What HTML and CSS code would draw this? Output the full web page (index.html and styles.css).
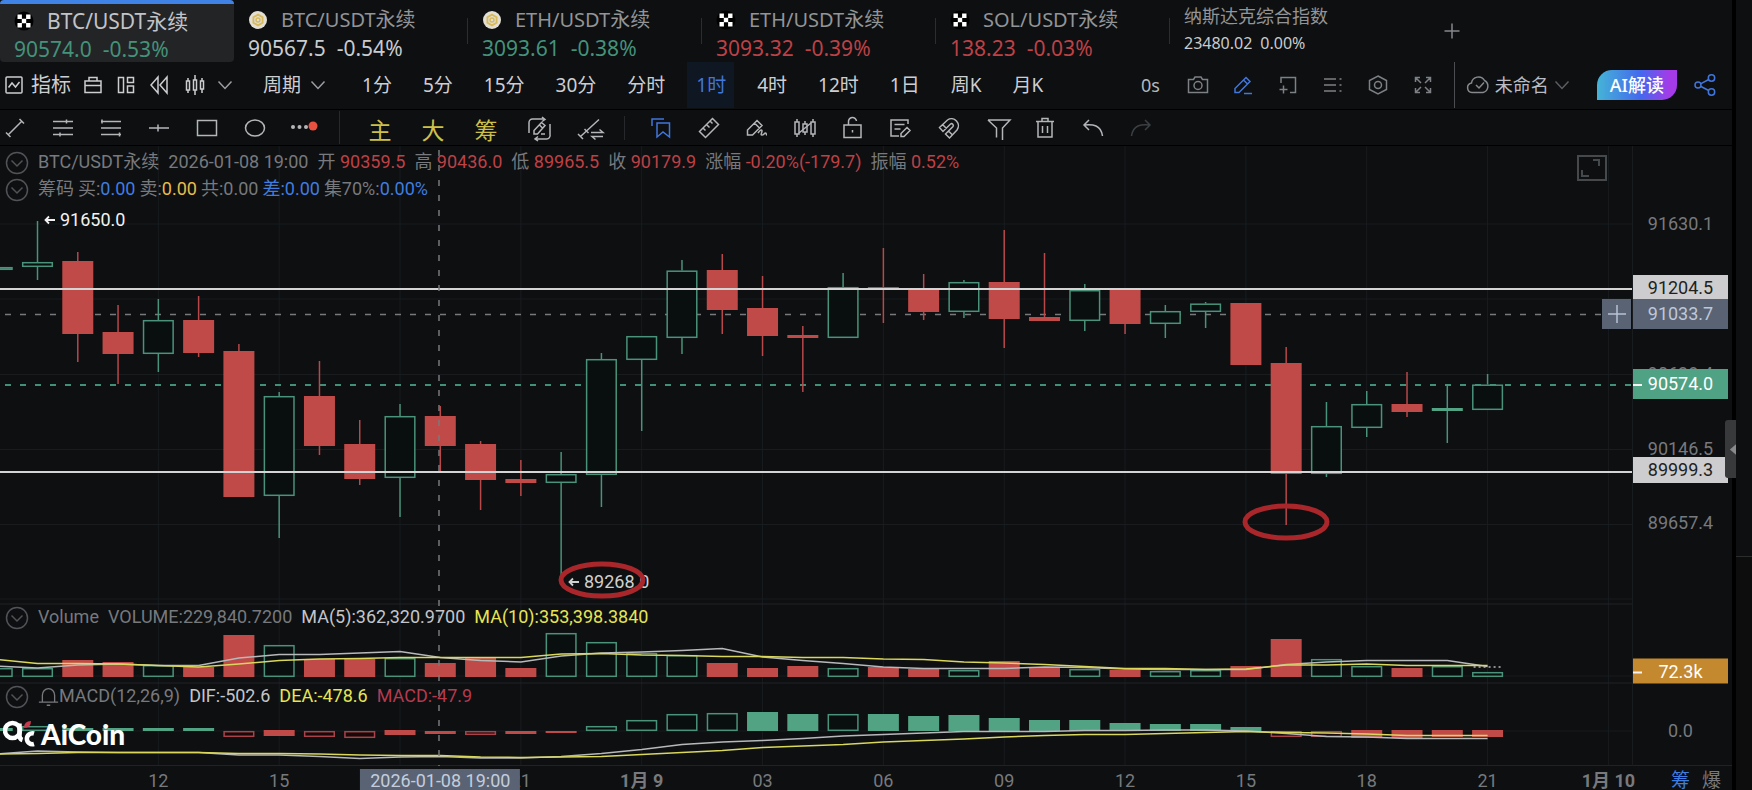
FILE: index.html
```html
<!DOCTYPE html>
<html lang="zh-CN">
<head>
<meta charset="utf-8">
<title>BTC/USDT永续</title>
<link rel="stylesheet" href="styles.css">
</head>
<body>
<svg class="defs" width="0" height="0" aria-hidden="true">
  <symbol id="okx" viewBox="0 0 20 20"><circle cx="10" cy="10" r="9.5" fill="#000"/><path fill="#fff" d="M3.5 3.5h4.4v4.4H3.5zM12.1 3.5h4.4v4.4h-4.4zM7.8 7.8h4.4v4.4H7.8zM3.5 12.1h4.4v4.4H3.5zM12.1 12.1h4.4v4.4h-4.4z"/></symbol>
  <symbol id="coin" viewBox="0 0 20 20"><circle cx="10" cy="10" r="9" fill="#e3dfd3"/><path d="M10 4.6l4.6 2.7v5.4L10 15.4l-4.6-2.7V7.300z" fill="none" stroke="#d8b95c" stroke-width="1.8"/><circle cx="10" cy="10" r="2" fill="none" stroke="#d8b95c" stroke-width="1.4"/></symbol>
  <symbol id="chev" viewBox="0 0 16 16"><path d="M1.500 4.500L8 11.500L14.500 4.500"/></symbol>
  <symbol id="fold" viewBox="0 0 24 24"><circle cx="12" cy="12" r="10.500"/><path d="M6.500 9.500L12 15L17.500 9.500"/></symbol>
  <symbol id="arrow" viewBox="0 0 11 10"><path d="M11 5H1.500M5 1.500L1.500 5L5 8.500"/></symbol>
</svg>

<div class="app">
  <nav class="tabs">
    <button class="tab active"><span class="pair"><svg class="coin"><use href="#okx"/></svg>BTC/USDT永续</span><span class="quote up"><span>90574.0</span><span>-0.53%</span></span></button>
    <button class="tab"><span class="pair"><svg class="coin"><use href="#coin"/></svg>BTC/USDT永续</span><span class="quote"><span>90567.5</span><span>-0.54%</span></span></button>
    <button class="tab"><span class="pair"><svg class="coin"><use href="#coin"/></svg>ETH/USDT永续</span><span class="quote up"><span>3093.61</span><span>-0.38%</span></span></button>
    <button class="tab"><span class="pair"><svg class="coin"><use href="#okx"/></svg>ETH/USDT永续</span><span class="quote down"><span>3093.32</span><span>-0.39%</span></span></button>
    <button class="tab"><span class="pair"><svg class="coin"><use href="#okx"/></svg>SOL/USDT永续</span><span class="quote down"><span>138.23</span><span>-0.03%</span></span></button>
    <button class="tab index"><span class="pair">纳斯达克综合指数</span><span class="quote"><span>23480.02</span><span>0.00%</span></span></button>
    <button class="add" aria-label="添加"><svg class="icon" viewBox="0 0 24 24"><path d="M12 4.500v15M4.500 12h15"/></svg></button>
  </nav>

  <div class="toolbar">
    <div class="tools">
      <button class="labelled"><svg class="icon" viewBox="0 0 24 24"><rect x="4" y="4" width="16" height="16" rx="1"/><path d="M6.500 14.500l3.500-4.500 3.500 4 4-5"/></svg>指标</button>
      <button aria-label="工具箱"><svg class="icon" viewBox="0 0 24 24"><rect x="4" y="8" width="16" height="11.500"/><path d="M8 8V4.500h8V8M4 12.500h16"/></svg></button>
      <button aria-label="布局"><svg class="icon" viewBox="0 0 24 24"><rect x="3.500" y="4.500" width="5" height="15"/><rect x="12.500" y="4.500" width="6" height="5"/><rect x="12.500" y="13" width="6" height="6.500"/></svg></button>
      <button aria-label="回放"><svg class="icon" viewBox="0 0 24 24"><path d="M9 4v16L2 12zM18 4v16l-7-8z"/></svg></button>
      <button aria-label="K线类型"><svg class="icon" viewBox="0 0 24 24"><rect x="3.500" y="8" width="3" height="9"/><rect x="10.500" y="7" width="3" height="10"/><rect x="17.500" y="8" width="3" height="8"/><path d="M5 5v3M5 17v3M12 2v5M12 17v5M19 5v3M19 16v4"/></svg></button>
      <button aria-label="更多类型"><svg class="chev"><use href="#chev"/></svg></button>
    </div>
    <button class="period">周期<svg class="chev"><use href="#chev"/></svg></button>
    <div class="intervals">
      <button>1分</button><button>5分</button><button>15分</button><button>30分</button><button>分时</button><button class="on">1时</button><button>4时</button><button>12时</button><button>1日</button><button>周K</button><button>月K</button>
    </div>
    <div class="actions">
      <span class="timer">0s</span>
      <button aria-label="截图"><svg class="icon" viewBox="0 0 24 24"><path d="M2.500 6.500h5L9 4h6l1.500 2.500h5v13h-19z"/><circle cx="12" cy="12.500" r="4"/></svg></button>
      <button class="blue" aria-label="画线"><svg class="icon" viewBox="0 0 24 24"><path d="M15 4.500L19 8.500L8 19.500H4v-4zM12.500 7l4 4M13 20.500h8"/></svg></button>
      <button aria-label="新窗口"><svg class="icon" viewBox="0 0 24 24"><path d="M5 10V4.500h14.500v15H14M7.500 12.500v8M3.500 16.500h8"/></svg></button>
      <button aria-label="列表"><svg class="icon" viewBox="0 0 24 24"><path d="M3 6h12M3 12h12M3 18h12M18.500 6h2M18.500 12h2M18.500 18h2"/></svg></button>
      <button aria-label="设置"><svg class="icon" viewBox="0 0 24 24"><path d="M12 3l8.500 4.500v9L12 21l-8.500-4.500v-9z"/><circle cx="12" cy="12" r="3.500"/></svg></button>
      <button aria-label="全屏"><svg class="icon" viewBox="0 0 24 24"><path d="M4.500 9V4.500H9M15 4.500h4.500V9M19.500 15v4.500H15M9 19.500H4.500V15M5 5l5 5M19 5l-5 5M19 19l-5-5M5 19l5-5"/></svg></button>
    </div>
    <div class="workspace">
      <button class="name"><svg class="icon" viewBox="0 0 24 24"><path d="M7 19.500H6a4.800 4.800 0 0 1-.5-9.500A7 7 0 0 1 18.500 7.500a6.500 6.500 0 0 1-1.500 12H7"/><path d="M10 12l3 3 5-5.500"/></svg>未命名<svg class="chev dim"><use href="#chev"/></svg></button>
      <button class="ai">AI解读</button>
      <button class="blue" aria-label="分享"><svg class="icon" viewBox="0 0 24 24"><circle cx="5" cy="12" r="3"/><circle cx="18.500" cy="5" r="3.200"/><circle cx="18.500" cy="19" r="3.200"/><path d="M8 10.700l7.700-4.200M8 13.500l7.700 4"/></svg></button>
    </div>
  </div>

  <div class="drawbar">
    <div class="group">
      <button aria-label="线段"><svg class="icon" viewBox="0 0 24 24"><path d="M5 19L19 5M3 16.500l4.500 4.500M16.500 3l4.500 4.500"/></svg></button>
      <button aria-label="平行线"><svg class="icon" viewBox="0 0 24 24"><path d="M2 5.500h20M2 12h20M2 18.500h20M15.500 3.500v4M9 16.500v4"/></svg></button>
      <button aria-label="射线组"><svg class="icon" viewBox="0 0 24 24"><path d="M2 5.500h20M2 12h20M2 18.500h20M3 3.500v4M20.500 16.500v4"/></svg></button>
      <button aria-label="水平线"><svg class="icon" viewBox="0 0 24 24"><path d="M2 12h20M11 8.500v7"/></svg></button>
      <button aria-label="矩形"><svg class="icon" viewBox="0 0 24 24"><rect x="2.500" y="4.500" width="19" height="15"/></svg></button>
      <button aria-label="椭圆"><svg class="icon" viewBox="0 0 24 24"><ellipse cx="12" cy="12" rx="9.500" ry="8"/></svg></button>
      <button aria-label="更多"><svg class="icon dots" viewBox="0 0 24 24"><circle cx="2" cy="11" r="2"/><circle cx="8.500" cy="11" r="2"/><circle cx="15" cy="11" r="2"/><circle cx="22" cy="10" r="4.500"/></svg></button>
    </div>
    <div class="group wide">
      <button class="glyph">主</button>
      <button class="glyph">大</button>
      <button class="glyph">筹</button>
      <button aria-label="切换绘图"><svg class="icon" viewBox="0 0 24 24"><path d="M2 17V6.500A3.500 3.500 0 0 1 5.500 3H17M15 1l3 2.500-3 2M23 8v10.500A3.500 3.500 0 0 1 19.500 23H9M11 20.500l-3 2.500 3 2M7 18v-3.500l7.500-8 3.500 3-7.500 8.500zM12.500 9l3 3M14 18h4"/></svg></button>
      <button aria-label="切换线段"><svg class="icon" viewBox="0 0 24 24"><path d="M0.500 20.500L19 3.500M-2 18l5 5M4.500 13l4 4M11 16.500h12l-3.500-3M23 20.500H12l3.500 3"/></svg></button>
    </div>
    <div class="group">
      <button class="blue" aria-label="收藏"><svg class="icon" viewBox="0 0 24 24"><path d="M8 7h12.500v14L14 16l-6 5zM3 10V3h12"/></svg></button>
      <button aria-label="测量"><svg class="icon" viewBox="0 0 24 24"><path d="M2.500 15.500L15.500 2.500l6 6L8.500 21.500zM6 12l2.500 2.500M9.500 8.500l3 3M13 5l2.500 2.500"/></svg></button>
      <button aria-label="画笔"><svg class="icon" viewBox="0 0 24 24"><path d="M2.500 19v-5L12 4.500l5 5L7.500 19zM9.500 7l5 5M13 17c2-3 4-4 4-2s-2 4 0 4 2-2 3.500-2 0 2 1.500 2"/></svg></button>
      <button aria-label="形态"><svg class="icon" viewBox="0 0 24 24"><rect x="2" y="6" width="4" height="12"/><rect x="18" y="6" width="4" height="12"/><rect x="10" y="8" width="4" height="8"/><path d="M4 3v3M4 18v3M20 3v3M20 18v3M12 5v3M12 16v3M6 17l12-10"/></svg></button>
      <button aria-label="解锁"><svg class="icon" viewBox="0 0 24 24"><rect x="3" y="9" width="17" height="12.500"/><path d="M7.500 9V6a4 4 0 0 1 8-1M11.500 14v2.500"/></svg></button>
      <button aria-label="备注"><svg class="icon" viewBox="0 0 24 24"><path d="M19 8V4H2v16h8M5.500 8.500h10M5.500 13h6M12 20.500v-3l6-6 3 3-6 6z"/></svg></button>
      <button aria-label="磁吸"><svg class="icon" viewBox="0 0 24 24"><path d="M2.500 11.500l8-7.500a7 7 0 0 1 9.500 10l-7.500 8-4-4 7.500-7.500a1.800 1.800 0 0 0-2.500-2.500L6 15.500zM5.500 8.500l4 4M11.500 15l4 4"/></svg></button>
      <button aria-label="筛选"><svg class="icon" viewBox="0 0 24 24"><path d="M3 4h22L17.500 12v12M3 4L11.500 12v9.500"/></svg></button>
      <button aria-label="删除"><svg class="icon" viewBox="0 0 24 24"><path d="M3 5.500h18M5 5.500v15.500h14V5.500M9 5V2.500h6V5M9.500 10v7M14.500 10v7"/></svg></button>
      <button aria-label="撤销"><svg class="icon" viewBox="0 0 24 24"><path d="M8 4L3 9l5 5M3 9c9-1 17 0 18.500 11"/></svg></button>
      <button class="off" aria-label="重做"><svg class="icon" viewBox="0 0 24 24"><path d="M16 4l5 5-5 5M21 9C12 8 4 9 2.500 20"/></svg></button>
    </div>
  </div>

  <main class="chart">
    <div class="plot">
      <svg id="plot" class="canvas" viewBox="0 146 1632 620" preserveAspectRatio="none" role="img" aria-label="BTC/USDT 1小时K线"></svg>
      <section class="pane price">
        <div class="legend"><svg class="icon fold"><use href="#fold"/></svg><span>BTC/USDT永续</span><span>2026-01-08 19:00</span><span>开 <b class="down">90359.5</b></span><span>高 <b class="down">90436.0</b></span><span>低 <b class="down">89965.5</b></span><span>收 <b class="down">90179.9</b></span><span>涨幅 <b class="down">-0.20%(-179.7)</b></span><span>振幅 <b class="down">0.52%</b></span></div>
        <div class="legend tight"><svg class="icon fold"><use href="#fold"/></svg><span>筹码</span><span>买:<b class="azure">0.00</b></span><span>卖:<b class="gold">0.00</b></span><span>共:0.00</span><span class="azure">差:0.00</span><span>集70%:<b class="azure">0.00%</b></span></div>
        <button class="maximize" aria-label="最大化"><svg viewBox="0 0 30 26"><rect x="1" y="1" width="28" height="24"/><path d="M16 5h6v6M5 15v6h7"/></svg></button>
      </section>
      <section class="pane volume">
        <div class="legend"><svg class="icon fold"><use href="#fold"/></svg><span>Volume</span><span>VOLUME:229,840.7200</span><span class="pale">MA(5):362,320.9700</span><span class="yellow">MA(10):353,398.3840</span></div>
      </section>
      <section class="pane macd">
        <div class="legend"><svg class="icon fold"><use href="#fold"/></svg><svg class="icon bell" viewBox="0 0 24 24"><path d="M1 18.500h22M5 18v-7.500a7 7.500 0 0 1 14 0v7.500M10 22h4"/></svg><span>MACD(12,26,9)</span><span class="pale">DIF:-502.6</span><span class="yellow">DEA:-478.6</span><span class="crimson">MACD:-47.9</span></div>
        <div class="brand"><svg viewBox="0 0 32 28"><circle cx="9.500" cy="10.500" r="7.500"/><path d="M16.500 3.500v12q0 3.500 3 4.500M31 13.500a5.500 5.500 0 1 0 0 10.500"/><path class="leaf" d="M21 8q0-7 7-7 0 7-7 7z"/></svg>AiCoin</div>
      </section>
      <div class="note high"><svg><use href="#arrow"/></svg>91650.0</div>
      <div class="note low"><svg><use href="#arrow"/></svg>89268.0</div>
      <svg class="canvas marks" viewBox="0 146 1632 620" preserveAspectRatio="none" aria-hidden="true"><ellipse cx="602" cy="580" rx="41" ry="16"/><ellipse cx="1286" cy="522" rx="41" ry="16"/></svg>
      <button class="plus" aria-label="添加价格线"><svg class="icon" viewBox="0 0 24 24"><path d="M12 3v18M3 12h18"/></svg></button>
    </div>
    <div class="scale" id="scale"></div>
    <div class="times" id="times"></div>
    <div class="modes"><button class="azure">筹</button><button>爆</button></div>
  </main>
</div>
<aside class="side"><button class="handle" aria-label="展开侧栏"><svg viewBox="0 0 8 12"><path d="M8 0v12L1 6z"/></svg></button></aside>
<script src="chart.js"></script>
</body>
</html>
```
FILE: styles.css
```css
* { box-sizing: border-box; }
body {
  margin: 0;
  height: 100vh;
  display: flex;
  overflow: hidden;
  background: #0d0f11;
  color: #c9cbce;
  font-family: "Noto Sans", "Noto Sans CJK SC", sans-serif;
}
button {
  margin: 0;
  padding: 0;
  border: 0;
  background: none;
  color: inherit;
  font: inherit;
  white-space: nowrap;
}
.defs { position: absolute; }
.icon {
  display: block;
  flex: none;
  width: 24px;
  height: 24px;
  fill: none;
  stroke: currentColor;
  stroke-width: 1.5;
  overflow: visible;
}
.chev {
  flex: none;
  width: 16px;
  height: 16px;
  fill: none;
  stroke: #9b9ea3;
  stroke-width: 1.5;
}
.app { flex: 1; min-width: 0; display: flex; flex-direction: column; }

.up { color: #45927a; }
.down { color: #bd4145; }
.blue { color: #4176dc; }
.azure { color: #3f7de0; }
.gold { color: #e6bd4a; }
.yellow { color: #e6e455; }
.pale { color: #c4c5c8; }
.crimson { color: #b53a4e; }

/* instrument tabs */
.tabs { display: flex; height: 62px; flex: none; }
.tab {
  position: relative;
  width: 234px;
  padding: 6px 0 0 14px;
  display: flex;
  flex-direction: column;
  text-align: left;
}
.tab::after {
  content: "";
  position: absolute;
  right: 0;
  top: 18px;
  height: 26px;
  border-right: 1px solid #2b2d30;
}
.tab.active {
  background: #232426;
  border-top: 4px solid #3f83e6;
  border-radius: 4px;
  padding-top: 3px;
  color: #d6d7d9;
}
.tab.active::after, .tab.index::after { content: none; }
.pair {
  display: flex;
  align-items: center;
  height: 28px;
  font-size: 20px;
  line-height: 28px;
  color: #929497;
}
.active .pair { font-size: 21px; color: #c2c3c6; }
.coin { width: 20px; height: 20px; margin-right: 13px; }
.quote { display: flex; gap: 11px; font-size: 21px; line-height: 28px; }
.tab.index { padding-top: 3px; }
.index .pair { font-size: 18px; height: 26px; }
.index .quote { font-size: 16px; gap: 8px; line-height: 28px; }
.add { margin-left: 36px; color: #85888c; }

/* interval toolbar */
.toolbar {
  display: flex;
  align-items: center;
  flex: none;
  height: 48px;
  padding-bottom: 1px;
  border-bottom: 1px solid #000;
  font-size: 19px;
  line-height: 28px;
  color: #cdced1;
}
.tools { display: flex; align-items: center; gap: 10px; padding-left: 2px; }
.tools button, .actions button, .workspace button { display: flex; align-items: center; }
.tools .labelled { font-size: 20px; gap: 5px; }
.period { display: flex; align-items: center; gap: 9px; margin-left: 30px; }
.intervals { display: flex; align-self: stretch; margin-left: 20px; }
.intervals button { padding: 0 15px 0 16px; }
.intervals .on { padding: 0 8px 0 9px; margin: 0 7px; background: #0f1722; color: #4176dc; }
.actions { display: flex; align-items: center; gap: 21px; margin-left: auto; padding-right: 19px; color: #7d8084; }
.timer { margin-right: 5px; color: #b5b7ba; font-size: 18px; }
.actions .blue { color: #4176dc; }
.workspace {
  display: flex;
  align-items: center;
  align-self: stretch;
  padding: 0 15px 0 11px;
  border-left: 1px solid #4b4d50;
}
.workspace .name { gap: 5px; font-size: 18px; color: #b9bcc4; }
.name .icon { color: #85888c; }
.chev.dim { stroke: #5b5e62; }
.workspace .ai {
  height: 30px;
  margin: 0 16px 0 27px;
  padding: 0 13px;
  border-radius: 15px 0 15px 0;
  background: linear-gradient(90deg, #45b4d6, #4468ee 55%, #a33ce8 90%);
  color: #fff;
  font-size: 18px;
  font-weight: 500;
}

/* drawing toolbar */
.drawbar { display: flex; align-items: center; flex: none; height: 36px; border-bottom: 1px solid #000; color: #b4b6b9; }
.group { display: flex; align-items: center; gap: 24px; padding: 0 24px 0 3px; }
.group + .group { border-left: 1px solid #26282b; padding-left: 24px; }
.group + .group.wide { gap: 29px; padding: 0 20px 0 28px; }
.glyph { width: 24px; padding-top: 5px; font-size: 23px; line-height: 28px; color: #cfc04a; text-align: center; }
.dots circle { fill: #b4b6b9; stroke: none; }
.dots circle:last-child { fill: #e8503f; }
.off { color: #3d4043; }

/* chart area */
.chart {
  flex: 1;
  min-height: 0;
  display: grid;
  grid-template: minmax(0, 1fr) 24px / minmax(0, 1fr) 100px;
  font-family: Roboto, "Noto Sans CJK SC", sans-serif;
  font-size: 18px;
  color: #77797d;
}
.plot { position: relative; display: grid; grid-template-rows: 458fr 79fr 83fr; }
.canvas { position: absolute; inset: 0; width: 100%; height: 100%; }
.pane { position: relative; min-height: 0; }
.price { padding-top: 3px; }
.legend {
  display: flex;
  align-items: baseline;
  gap: 9px;
  height: 27px;
  padding-left: 5px;
  line-height: 26px;
  white-space: nowrap;
}
.legend b { font-weight: 400; }
.legend.tight { gap: 4px; }
.legend .fold { align-self: center; color: #505357; }
.legend.tight .fold { margin-right: 5px; }
.legend .bell { align-self: center; width: 21px; height: 21px; margin-right: -9px; }
.maximize { position: absolute; right: 25px; top: 9px; }
.maximize svg { display: block; width: 30px; height: 26px; fill: none; stroke: #46494c; stroke-width: 2; }
.note { position: absolute; display: flex; align-items: center; gap: 5px; line-height: 22px; color: #f2f2f2; white-space: nowrap; }
.note svg { width: 11px; height: 10px; fill: none; stroke: currentColor; stroke-width: 1.8; }
.high { left: 44px; top: 63px; }
.low { left: 568px; top: 425px; color: #d0d0d0; }
.marks { fill: none; stroke: #a9262b; stroke-width: 5; }
.plus {
  position: absolute;
  right: 1px;
  top: 153px;
  width: 29px;
  height: 30px;
  padding: 3px;
  background: #5a6373;
  color: #b7c3d6;
}
.brand {
  position: absolute;
  left: 3px;
  top: 36px;
  display: flex;
  align-items: center;
  gap: 6px;
  color: #fff;
  font: 900 28px/30px Lato, sans-serif;
}
.brand svg { width: 32px; height: 28px; fill: none; stroke: #fff; stroke-width: 4.5; }
.brand .leaf { fill: #c9394b; stroke: none; }

.grid { stroke: #191c1f; }
.rule { stroke: #202326; }
.bear { fill: #c04a47; stroke: none; }
.bull { fill: #090e0f; stroke: #4a9279; stroke-width: 1.5; }
.bull.solid { fill: #52a384; stroke: none; }
.bear.hollow { fill: #170809; stroke: #a8434b; stroke-width: 1.5; }
.wick-bear { stroke: #b8484a; stroke-width: 1.5; }
.wick-bull { stroke: #4a9279; stroke-width: 1.5; }
.white, .yellow-line, .level, .cross, .last { fill: none; stroke-width: 1.5; }
.white { stroke: #b7b8ba; }
.yellow-line { stroke: #d9d75c; }
.level { stroke: #d4d4d4; stroke-width: 2; }
.cross { stroke: #77797d; stroke-dasharray: 6 9; }
.last { stroke: #43907a; stroke-width: 2; stroke-dasharray: 6 9; }

/* price and time scales */
.scale { position: relative; border-left: 1px solid #191c1f; border-bottom: 1px solid #202326; }
.scale span {
  position: absolute;
  left: 0;
  width: 95px;
  text-align: center;
  line-height: 26px;
  transform: translateY(-50%);
}
.scale .tag-light { background: #cdcdcf; color: #1e1f21; }
.scale .tag-cursor { background: #5a6373; color: #bdc8da; line-height: 30px; }
.scale .tag-last { background: #4fa283; color: #fff; line-height: 30px; }
.scale .tag-volume { background: #c4882f; color: #fff; line-height: 25px; }
.scale .tag-last::before, .scale .tag-volume::before {
  content: "";
  position: absolute;
  left: 0;
  top: 50%;
  width: 9px;
  border-top: 2px solid #f4f4f4;
}
.times { position: relative; }
.times span { position: absolute; top: 3px; line-height: 24px; transform: translateX(-50%); white-space: nowrap; }
.times .day { font-weight: 700; }
.times .cursor { background: #5a6373; color: #c3cddd; padding: 0 10px; }
.modes { display: flex; gap: 12px; padding: 3px 0 0 39px; font-size: 19px; line-height: 24px; }

/* collapsed side panel */
.side { position: relative; flex: none; width: 20px; border-left: 4px solid #000; background: linear-gradient(#0d0f11 556px, #2b2c2c 556px, #2b2c2c 557px, #0d0d0e 557px); }
.handle {
  position: absolute;
  left: -11px;
  top: 420px;
  width: 11px;
  height: 58px;
  border-radius: 3px 0 0 3px;
  background: #38393b;
}
.handle svg { display: block; width: 7px; height: 11px; margin-left: 4px; fill: #898a8c; }
```
FILE: chart.js
```js
(function () {
  var plot = document.getElementById('plot');
  var W = 1632, TOP = 146, H = 620, X0 = 37.5, STEP = 40.28, BAR = 31;
  var out = [];
  function x(i) { return X0 + STEP * i; }
  function line(cls, x1, y1, x2, y2, extra) {
    out.push('<line class="' + cls + '" x1="' + x1 + '" y1="' + y1 + '" x2="' + x2 + '" y2="' + y2 + '" ' + (extra || '') + '/>');
  }
  function bar(cls, i, top, bottom) {
    var inset = /bull$|hollow/.test(cls) ? 0.7 : 0;
    out.push('<rect class="' + cls + '" x="' + (x(i) - BAR / 2 + inset) + '" y="' + (top + inset) + '" width="' + (BAR - 2 * inset) +
      '" height="' + Math.max(1, bottom - top - 2 * inset) + '"/>');
  }
  function path(cls, ys) {
    out.push('<polyline class="' + cls + '" points="' + ys.map(function (y, k) { return x(k - 1) + ',' + y; }).join(' ') + '"/>');
  }

  // grid
  var ticks = [3, 6, 9, 12, 15, 18, 21, 24, 27, 30, 33, 36, 39];
  ticks.forEach(function (i) { line('grid', x(i), TOP, x(i), 766); });
  [224, 299, 374.5, 449.5, 524.5, 599, 676, 731].forEach(function (y) { line('grid', 0, y, W, y); });
  [604, 683, 765.5].forEach(function (y) { line('rule', 0, y, W, y); });
  line('cross', 5, 314.5, W, 314.5);
  line('last', 5, 385, W, 385);

  // direction, high, body top, body bottom, low
  var candles = [
    'G 267 267 270 270', 'G 221 262 267 280', 'R 252 261 334 362', 'R 305 332 354 384', 'G 299 320 354 372', 'R 296 320 353 357',
    'R 344 351 497 497', 'G 392 396 496 538', 'R 361 396 446 455', 'R 420 444 479 485', 'G 404 416 478 517',
    'R 406 416 446 473', 'R 441 444 480 510', 'R 460 479 483 496', 'G 452 474 483 576', 'G 353 359 475 507',
    'G 336 336 360 431', 'G 260 270.5 338 354', 'R 254 270 310 334', 'R 276 308 336 356', 'R 326 335 338 392',
    'G 273 287 338 338', 'R 248 287 289 323', 'R 274 289 312 320', 'G 280 282 312 318', 'R 230 282 319 348',
    'R 253 317 321 321', 'G 284 290 321 331', 'R 290 290 324 334', 'G 305 311 324 338', 'G 302 303.5 312 328',
    'R 303 303 365 365', 'R 347 363 474 525', 'G 402 426 474 477', 'G 391 404 428 437', 'R 372 404 412 417',
    'S 384 408 411 443', 'G 374 384.5 410 410'
  ].map(function (s) { var p = s.split(' '); return [p[0]].concat(p.slice(1).map(Number)); });
  candles.forEach(function (c, k) {
    var i = k - 1, bear = c[0] === 'R', wick = bear ? 'wick-bear' : 'wick-bull';
    if (c[1] < c[2]) line(wick, x(i), c[1], x(i), c[2]);
    if (c[4] > c[3]) line(wick, x(i), c[3], x(i), c[4]);
    bar(bear ? 'bear' : c[0] === 'S' ? 'bull solid' : 'bull', i, c[2], c[3]);
  });

  // volume
  [668, 668, 660, 662, 665, 667, 635, 645, 659, 659, 658, 663, 658, 668, 633, 642, 653, 655, 663, 668, 666, 668, 667, 669, 670, 661,
    667, 669, 670, 671, 670, 666, 639, 659, 666, 668, 666, 672].forEach(function (y, k) {
    bar(candles[k][0] === 'R' ? 'bear' : 'bull', k - 1, y, 677);
  });
  path('white', [666, 668, 665, 664, 665.5, 665.5, 658, 654.5, 654.5, 653, 651.5, 657.5, 660.5, 662, 656, 653, 652, 650.5, 648.5, 657,
    660.5, 663.5, 667, 668.5, 668.5, 668.5, 667, 667.5, 669, 669.5, 669.5, 669.5, 664.5, 662, 660.5, 660.5, 660.5, 666.5]);
  path('yellow-line', [659.5, 663.5, 663.5, 664, 665.5, 667, 664, 660.5, 659, 658.5, 657.5, 657.5, 657.5, 657.5, 654, 653.5, 655, 655.5, 656.5,
    656.5, 657.5, 657.5, 659, 659.5, 662, 663, 664.5, 666.5, 668.5, 668.5, 669.5, 669, 665, 665, 664, 665.5, 665.5, 665.5]);
  line('white', x(36) - 14, 667, x(36) + 16, 667, 'stroke-dasharray="2 3"');

  // MACD histogram: style, top, bottom
  ['g 728 731', 'G 726 731', 'g 728 731', 'g 728 731', 'g 728 731', 'g 728 731', 'R 731 737', 'r 730 736', 'R 731 737', 'R 731 738',
    'r 730 735', 'r 731 734', 'R 731 735', 'r 731 734', 'r 731 733', 'G 726 731', 'G 720 731', 'G 714 731', 'G 713 731',
    'g 712 731', 'g 714 731', 'G 714 731', 'g 714 731', 'g 716 731', 'g 715 731', 'g 718 731', 'g 720 731', 'g 720 731',
    'g 723 731', 'g 724 731', 'g 724 731', 'g 727 731', 'R 731 737', 'R 731 737', 'r 730 738', 'r 730 738', 'r 730 737',
    'r 730 737'].forEach(function (s, k) {
    var p = s.split(' ');
    bar({ g: 'bull solid', G: 'bull', r: 'bear', R: 'bear hollow' }[p[0]], k - 1, +p[1], +p[2]);
  });
  path('white', [754, 751, 752, 752.5, 752.5, 752.5, 755, 755, 756.5, 758.5, 757, 756.5, 758, 758, 756.5, 753.5, 749.5, 744.5, 742, 740.5,
    738.5, 736, 734.5, 733, 731.5, 731.5, 731.5, 730.5, 730.5, 730, 730, 731, 733.5, 736.5, 737, 738.5, 738.5, 738.5]);
  path('yellow-line', [754, 753.5, 752.5, 752.5, 752.5, 752.5, 753.5, 753.5, 754, 755, 755.5, 755.5, 757, 757.5, 757, 756.5, 754.5, 752.5,
    750.5, 747.5, 746, 744.5, 742, 740.5, 739, 737, 735.5, 734.5, 734.5, 733.5, 732.5, 731.5, 732.5, 733, 734, 735.5, 735.5, 735.5]);

  // levels and crosshair
  line('level', 0, 289, W, 289);
  line('level', 0, 472, W, 472);
  line('cross', 439, 150, 439, 766);
  plot.innerHTML = out.join('');

  function put(host, cls, text, prop, pct) {
    var el = document.createElement('span');
    el.className = cls;
    el.textContent = text;
    el.style[prop] = pct + '%';
    host.appendChild(el);
  }
  var scale = document.getElementById('scale');
  [['', '91630.1', 224], ['', '90638.4', 374], ['', '90146.5', 449], ['', '89657.4', 524], ['', '0.0', 732],
    ['tag-light', '91204.5', 288], ['tag-cursor', '91033.7', 314], ['tag-last', '90574.0', 384], ['tag-light', '89999.3', 471],
    ['tag-volume', '72.3k', 672]].forEach(function (t) { put(scale, t[0], t[1], 'top', (t[2] - TOP) / H * 100); });

  var times = document.getElementById('times');
  [['', '12', 3], ['', '15', 6], ['', '21', 12], ['day', '1月 9', 15], ['', '03', 18], ['', '06', 21], ['', '09', 24], ['', '12', 27],
    ['', '15', 30], ['', '18', 33], ['', '21', 36], ['day', '1月 10', 39], ['cursor', '2026-01-08 19:00', 10]].forEach(function (t) {
    put(times, t[0], t[1], 'left', x(t[2]) / W * 100);
  });
})();
```
